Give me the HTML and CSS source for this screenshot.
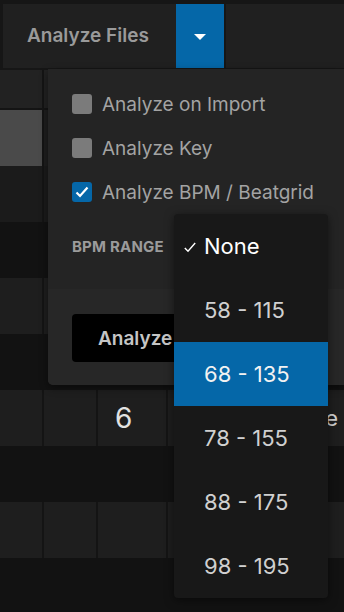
FILE: index.html
```html
<!DOCTYPE html>
<html>
<head>
<meta charset="utf-8">
<link rel="stylesheet" href="styles.css">
</head>
<body>
<div class="app">
  <div class="topbar">
    <div class="tb-title">Analyze Files</div>
    <div class="tb-arrow">
      <svg width="12" height="7" viewBox="0 0 12 7"><path d="M0 0H12L6 6Z" fill="#fff"/></svg>
    </div>
    <div class="tb-rest"></div>
  </div>

  <div class="grid">
    <div class="row light short"><div class="cell c0"></div><div class="cell c1"></div><div class="cell c2"></div><div class="cell c3"></div></div>
    <div class="row light"><div class="cell c0 hl"></div><div class="cell c1"></div><div class="cell c2"></div><div class="cell c3"></div></div>
    <div class="row light dim"><div class="cell c0"></div><div class="cell c1"></div><div class="cell c2"></div><div class="cell c3"></div></div>
    <div class="row dark"></div>
    <div class="row light"><div class="cell c0"></div><div class="cell c1"></div><div class="cell c2"></div><div class="cell c3"></div></div>
    <div class="row dark"></div>
    <div class="row light"><div class="cell c0"></div><div class="cell c1"></div><div class="cell c2 num">6</div><div class="cell c3 txt">Tune</div></div>
    <div class="row dark"></div>
    <div class="row light"><div class="cell c0"></div><div class="cell c1"></div><div class="cell c2"></div><div class="cell c3"></div></div>
    <div class="row dark"></div>
  </div>

  <div class="panel">
    <div class="panel-body">
      <label class="opt"><span class="box"></span><span class="opt-text">Analyze on Import</span></label>
      <label class="opt"><span class="box"></span><span class="opt-text">Analyze Key</span></label>
      <label class="opt"><span class="box checked"><svg width="14" height="12" viewBox="0 0 14 12"><path d="M1.5 6.5L5 10L12.5 1.5" fill="none" stroke="#fff" stroke-width="2.2"/></svg></span><span class="opt-text">Analyze BPM / Beatgrid</span></label>
      <div class="range-row"><span class="range-label">BPM RANGE</span></div>
    </div>
    <div class="panel-foot">
      <button class="analyze-btn">Analyze</button>
    </div>
  </div>

  <div class="dropdown">
    <div class="item current"><svg class="tick" width="12" height="11" viewBox="0 0 12 11"><path d="M0.8 6L4 9.3L11.2 1" fill="none" stroke="#fff" stroke-width="1.4"/></svg><span>None</span></div>
    <div class="item"><span>58 - 115</span></div>
    <div class="item selected"><span>68 - 135</span></div>
    <div class="item"><span>78 - 155</span></div>
    <div class="item"><span>88 - 175</span></div>
    <div class="item"><span>98 - 195</span></div>
  </div>
</div>
</body>
</html>
```

FILE: styles.css
```css
* { box-sizing: border-box; }
html, body {
  margin: 0;
  padding: 0;
  background: #121212;
  font-family: Inter, "Noto Sans", sans-serif;
}
.app {
  position: relative;
  width: 344px;
  height: 612px;
  overflow: hidden;
  background: #121212;
}
.topbar {
  display: flex;
  height: 70px;
  padding: 4px 0 2px 3px;
  background: #161616;
}
.tb-title {
  width: 173px;
  background: #202020;
  color: #9a9a9a;
  font-size: 19px;
  font-weight: 600;
  display: flex;
  align-items: center;
  padding-left: 24px;
  padding-bottom: 1px;
}
.tb-arrow {
  width: 48px;
  background: #0567a8;
  display: flex;
  align-items: center;
  justify-content: center;
}
.tb-arrow svg { margin-top: 2px; }
.tb-rest {
  flex: 1;
  margin-left: 2px;
  background: #202020;
}
.grid {
  display: flex;
  flex-direction: column;
}
.row {
  display: flex;
  gap: 2px;
  height: 56px;
  background: #141414;
}
.row.short { height: 40px; border-bottom: 2px solid #141414; }
.row.dark { background: #121212; }
.cell { background: #1e1e1e; }
.row.short .cell { background: #222; }
.row.dim .cell { background: #1b1b1b; }
.cell.hl { background: #4a4a4a; }
.c0 { width: 42px; }
.c1 { width: 52px; }
.c2 { width: 68px; }
.c3 { flex: 1; }
.num {
  color: #e2e2e2;
  font-size: 28px;
  display: flex;
  align-items: center;
  padding-left: 17px;
}
.txt {
  color: #d0d0d0;
  font-size: 22px;
  display: flex;
  align-items: center;
  justify-content: flex-end;
  padding-right: 6px;
}
.panel {
  position: absolute;
  left: 48px;
  right: 0;
  top: 69px;
  height: 316px;
  background: #242424;
  border-radius: 0 0 0 5px;
  box-shadow: 0 3px 8px rgba(0,0,0,0.45);
  display: flex;
  flex-direction: column;
  overflow: hidden;
}
.panel-body {
  padding: 13px 0 0 24px;
  height: 220px;
}
.opt {
  display: flex;
  align-items: center;
  height: 44px;
  gap: 10px;
}
.box {
  width: 20px;
  height: 20px;
  border-radius: 3px;
  background: #7b7b7b;
  display: flex;
  align-items: center;
  justify-content: center;
}
.box.checked { background: #0567a8; }
.opt-text {
  color: #a3a3a3;
  font-size: 19px;
}
.range-row {
  height: 64px;
  display: flex;
  align-items: center;
}
.range-label {
  color: #9b9b9b;
  font-size: 15px;
  font-weight: 700;
  letter-spacing: 0.2px;
}
.panel-foot {
  flex: 1;
  background: #272727;
  padding: 25px 0 0 24px;
}
.analyze-btn {
  height: 48px;
  width: 170px;
  background: #000;
  border: none;
  border-radius: 4px;
  color: #c5c5c5;
  font-family: Inter, "Noto Sans", sans-serif;
  font-size: 19px;
  font-weight: 600;
  text-align: left;
  padding: 0 0 0 26px;
}
.dropdown {
  position: absolute;
  left: 174px;
  top: 214px;
  width: 154px;
  background: #181818;
  border-radius: 4px;
  box-shadow: 0 2px 10px rgba(0,0,0,0.5);
  overflow: hidden;
  display: flex;
  flex-direction: column;
}
.item {
  height: 64px;
  display: flex;
  align-items: center;
  padding-left: 30px;
  color: #d0d0d0;
  font-size: 22px;
  position: relative;
}
.item.current { color: #fff; }
.item.selected { background: #0567a8; color: #f2f2f2; }
.tick {
  position: absolute;
  left: 10px;
  top: 28px;
}
```
